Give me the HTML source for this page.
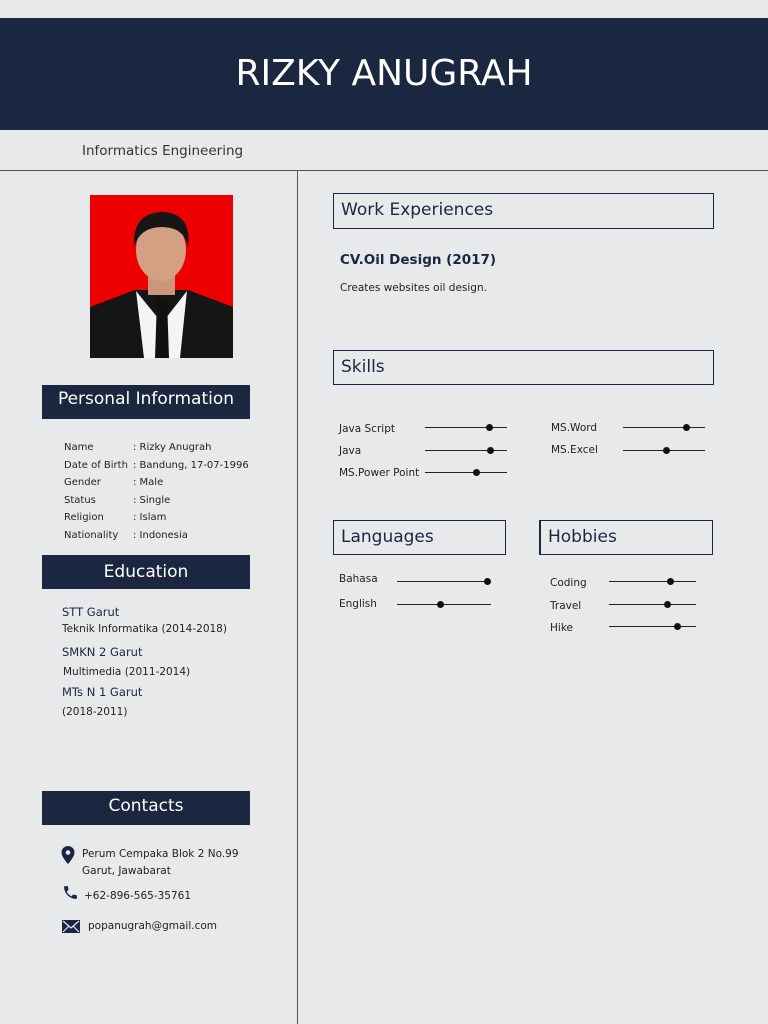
<!DOCTYPE html>
<html><head><style>
*{margin:0;padding:0;box-sizing:border-box}
body{width:768px;height:1024px;background:#e8e9eb;position:relative;overflow:hidden;font-family:"DejaVu Sans","Liberation Sans",sans-serif;color:#1b2640}
.a{position:absolute;white-space:nowrap}
.bar{position:absolute;background:#1b2640;color:#fff;text-align:center}
.box{position:absolute;border:1px solid #1b2640;font-size:17px;padding-left:7px;line-height:32px;color:#1b2640}
.s{font-size:10.5px;color:#222}
.ln{position:absolute;height:1px;background:#222}
.dt{position:absolute;width:7px;height:7px;border-radius:50%;background:#111}
</style></head><body>
<div class="bar" style="left:0;top:18px;width:768px;height:112px;font-size:36px;line-height:112px">RIZKY ANUGRAH</div>
<div class="a" style="left:82px;top:143px;font-size:13.5px;color:#333">Informatics Engineering</div>
<div class="a" style="left:0;top:170px;width:768px;height:1px;background:#555"></div>
<div class="a" style="left:297px;top:170px;width:1px;height:854px;background:#555"></div>

<svg class="a" style="left:90px;top:195px" width="143" height="163" viewBox="0 0 143 163">
<rect width="143" height="163" fill="#e00"/>
<path d="M0 112 L45 95 L98 95 L143 112 L143 163 L0 163Z" fill="#151515"/>
<path d="M46 96 L72 128 L97 96 L90 163 L54 163Z" fill="#f4f4f4"/>
<path d="M67 104 L77 104 L79 163 L65 163Z" fill="#111"/>
<rect x="58" y="74" width="27" height="26" fill="#c9967a"/>
<ellipse cx="71" cy="55" rx="25" ry="31" fill="#d4a083"/>
<path d="M44 52 Q42 18 72 17 Q102 18 98 52 Q94 32 72 32 Q50 32 44 52Z" fill="#161616"/>
</svg>

<div class="bar" style="left:42px;top:385px;width:208px;height:34px;font-size:17px;line-height:28px">Personal Information</div>
<div class="a s" style="left:64px;top:439px;line-height:17.5px;font-size:10px">Name<br>Date of Birth<br>Gender<br>Status<br>Religion<br>Nationality</div>
<div class="a s" style="left:133px;top:439px;line-height:17.5px;font-size:10px">: Rizky Anugrah<br>: Bandung, 17-07-1996<br>: Male<br>: Single<br>: Islam<br>: Indonesia</div>

<div class="bar" style="left:42px;top:555px;width:208px;height:34px;font-size:17px;line-height:34px">Education</div>
<div class="a" style="left:62px;top:605px;font-size:11.5px">STT Garut</div>
<div class="a s" style="left:62px;top:623px">Teknik Informatika (2014-2018)</div>
<div class="a" style="left:62px;top:645px;font-size:11.5px">SMKN 2 Garut</div>
<div class="a s" style="left:63px;top:666px">Multimedia (2011-2014)</div>
<div class="a" style="left:62px;top:685px;font-size:11.5px">MTs N 1 Garut</div>
<div class="a s" style="left:62px;top:706px">(2018-2011)</div>

<div class="bar" style="left:42px;top:791px;width:208px;height:34px;font-size:17px;line-height:30px">Contacts</div>
<svg class="a" style="left:61px;top:846px" width="14" height="18" viewBox="0 0 14 18"><path d="M7 0A6.5 6.5 0 0 0 .5 6.5C.5 11 7 18 7 18S13.5 11 13.5 6.5A6.5 6.5 0 0 0 7 0Z" fill="#1b2640"/><circle cx="7" cy="6.5" r="2.3" fill="#e8e9eb"/></svg>
<div class="a s" style="left:82px;top:846px;line-height:17px">Perum Cempaka Blok 2 No.99<br>Garut, Jawabarat</div>
<svg class="a" style="left:62px;top:884px" width="17" height="17" viewBox="0 0 24 24"><path d="M6.6 10.8a15 15 0 0 0 6.6 6.6l2.2-2.2c.3-.3.7-.4 1-.2 1.1.4 2.3.6 3.6.6.6 0 1 .4 1 1V20c0 .6-.4 1-1 1A17 17 0 0 1 3 4c0-.6.4-1 1-1h3.5c.6 0 1 .4 1 1 0 1.3.2 2.5.6 3.6.1.3 0 .7-.2 1z" fill="#1b2640"/></svg>
<div class="a s" style="left:84px;top:890px">+62-896-565-35761</div>
<svg class="a" style="left:62px;top:920px" width="18" height="13" viewBox="0 0 18 13"><rect width="18" height="13" fill="#1b2640"/><path d="M1 1L9 8L17 1M1 12L7 6M17 12L11 6" stroke="#e8e9eb" stroke-width="1.2" fill="none"/></svg>
<div class="a s" style="left:88px;top:920px">popanugrah@gmail.com</div>

<div class="box" style="left:333px;top:193px;width:381px;height:36px">Work Experiences</div>
<div class="a" style="left:340px;top:252px;font-size:13.5px;font-weight:bold">CV.Oil Design (2017)</div>
<div class="a s" style="left:340px;top:282px">Creates websites oil design.</div>

<div class="box" style="left:333px;top:350px;width:381px;height:35px">Skills</div>
<div class="a s" style="left:339px;top:418px;line-height:22px">Java Script<br>Java<br>MS.Power Point</div>
<div class="ln" style="left:425px;top:427px;width:82px"></div><div class="dt" style="left:486px;top:424px"></div>
<div class="ln" style="left:425px;top:450px;width:82px"></div><div class="dt" style="left:487px;top:447px"></div>
<div class="ln" style="left:425px;top:472px;width:82px"></div><div class="dt" style="left:473px;top:469px"></div>
<div class="a s" style="left:551px;top:417px;line-height:22px">MS.Word<br>MS.Excel</div>
<div class="ln" style="left:623px;top:427px;width:82px"></div><div class="dt" style="left:683px;top:424px"></div>
<div class="ln" style="left:623px;top:450px;width:82px"></div><div class="dt" style="left:663px;top:447px"></div>

<div class="box" style="left:333px;top:520px;width:173px;height:35px">Languages</div>
<div class="box" style="left:539px;top:520px;width:174px;height:35px;border-left-width:2px">Hobbies</div>
<div class="a s" style="left:339px;top:573px">Bahasa</div>
<div class="a s" style="left:339px;top:598px">English</div>
<div class="ln" style="left:397px;top:581px;width:92px"></div><div class="dt" style="left:484px;top:578px"></div>
<div class="ln" style="left:397px;top:604px;width:94px"></div><div class="dt" style="left:437px;top:601px"></div>
<div class="a s" style="left:550px;top:572px;line-height:22.5px">Coding<br>Travel<br>Hike</div>
<div class="ln" style="left:609px;top:581px;width:87px"></div><div class="dt" style="left:667px;top:578px"></div>
<div class="ln" style="left:609px;top:604px;width:87px"></div><div class="dt" style="left:664px;top:601px"></div>
<div class="ln" style="left:609px;top:626px;width:87px"></div><div class="dt" style="left:674px;top:623px"></div>
</body></html>
